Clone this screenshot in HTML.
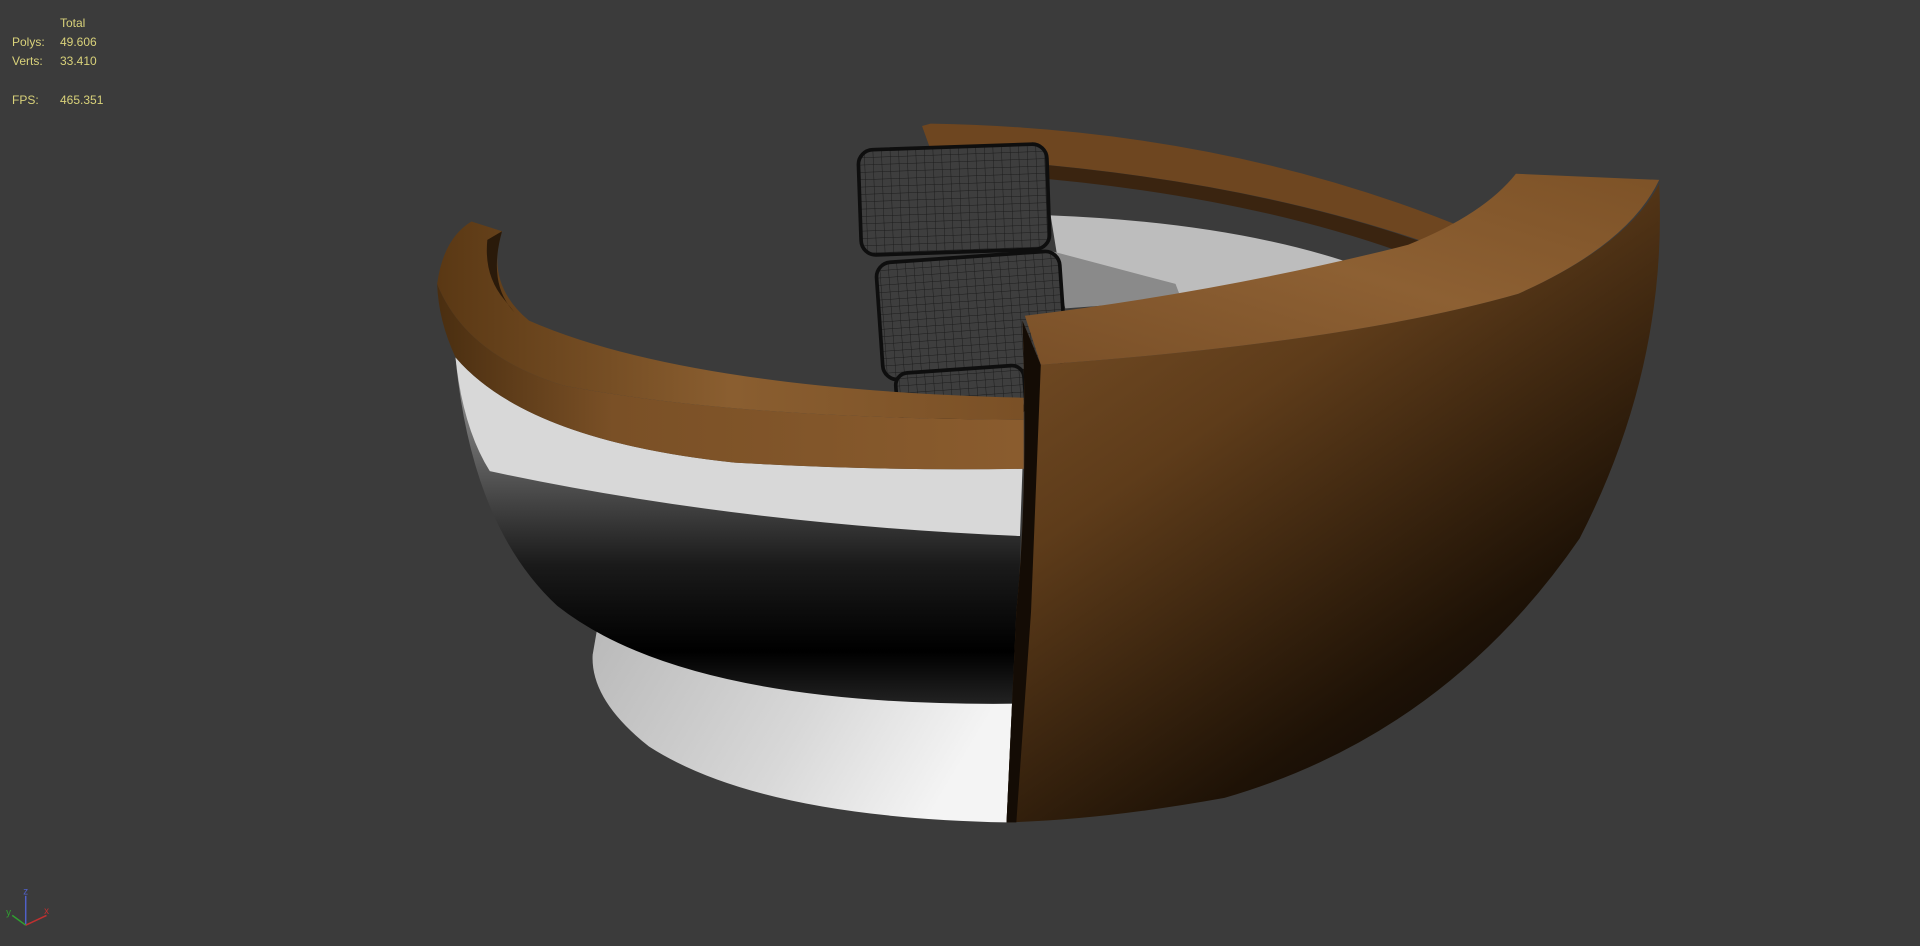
<!DOCTYPE html>
<html><head><style>
html,body{margin:0;padding:0;background:#3b3b3b;width:1920px;height:946px;overflow:hidden}
.t{position:absolute;font-family:"Liberation Sans",sans-serif;font-size:12px;color:#d9d27a;line-height:13px}
svg{position:absolute;left:0;top:0}
</style></head><body>
<svg width="1920" height="946" viewBox="0 0 1568 773" preserveAspectRatio="none">
<defs>
<linearGradient id="bowl" x1="0" y1="0" x2="0" y2="1">
<stop offset="0" stop-color="#9a9a9a"/><stop offset="0.25" stop-color="#6a6a6a"/><stop offset="0.6" stop-color="#1a1a1a"/><stop offset="0.85" stop-color="#000"/><stop offset="1" stop-color="#222"/></linearGradient>
<linearGradient id="base" x1="0" y1="0" x2="1" y2="0.3">
<stop offset="0" stop-color="#b8b8b8"/><stop offset="0.6" stop-color="#d8d8d8"/><stop offset="1" stop-color="#f4f4f4"/></linearGradient>
<linearGradient id="front" x1="0" y1="0" x2="0.7" y2="1">
<stop offset="0" stop-color="#7e542a"/><stop offset="0.4" stop-color="#5e3c1a"/><stop offset="0.8" stop-color="#1e1206"/><stop offset="1" stop-color="#0a0603"/></linearGradient>
<linearGradient id="top" x1="0" y1="1" x2="1" y2="0">
<stop offset="0" stop-color="#7a5028"/><stop offset="0.5" stop-color="#8d6033"/><stop offset="1" stop-color="#7d5227"/></linearGradient>
<linearGradient id="lface" x1="0" y1="0" x2="1" y2="0">
<stop offset="0" stop-color="#5a3814"/><stop offset="0.5" stop-color="#8a5e30"/><stop offset="1" stop-color="#7a5026"/></linearGradient>
<linearGradient id="lfront" x1="0" y1="0" x2="1" y2="0">
<stop offset="0" stop-color="#4a2e10"/><stop offset="0.3" stop-color="#7a5026"/><stop offset="1" stop-color="#8a5c2e"/></linearGradient>
<pattern id="grid" width="7" height="6" patternUnits="userSpaceOnUse">
<rect width="7" height="6" fill="#3e3e3e"/><path d="M0 0H7M0 0V6" stroke="#1c1c1c" stroke-width="0.8"/></pattern>
</defs>
<!-- base -->
<path d="M488 512 Q600 498 830 498 L822 672 Q620 668 530 610 Q482 572 484 535 Z" fill="url(#base)"/>
<!-- back ring -->
<path d="M753 103 L760 101 Q1000 105 1200 188 L1170 200 Q1000 140 762 128 Z" fill="#6e4620"/>
<path d="M760 128 Q1000 140 1168 200 L1150 208 Q990 150 765 140 Z" fill="#3a2410"/>
<!-- inner white -->
<path d="M858 176 Q1010 182 1112 218 Q1030 238 965 243 L870 250 Z" fill="#bdbdbd"/>
<path d="M858 205 L960 232 L965 245 L870 252 Z" fill="#8a8a8a"/>
<!-- chair -->
<g stroke="#0e0e0e" stroke-width="3">
<rect x="702" y="120" width="154" height="86" rx="12" fill="url(#grid)" transform="rotate(-2 780 160)"/>
<rect x="718" y="210" width="150" height="96" rx="12" fill="url(#grid)" transform="rotate(-4 790 255)"/>
<rect x="732" y="302" width="105" height="40" rx="10" fill="url(#grid)" transform="rotate(-4 780 320)"/>
</g>
<!-- bowl -->
<path d="M372 292 Q430 360 600 378 Q720 385 835 383 L830 575 Q560 578 455 495 Q385 430 372 292 Z" fill="url(#bowl)"/>
<path d="M372 292 Q430 360 600 378 Q720 385 835 383 L833 438 Q600 428 400 385 Q378 350 372 292 Z" fill="#d8d8d8"/>
<!-- left rim front -->
<path d="M357 232 Q380 290 460 315 Q600 342 836 343 L836 383 Q720 385 600 378 Q430 360 372 292 Q358 262 357 232 Z" fill="url(#lfront)"/>
<!-- left rim top -->
<path d="M385 181 L410 189 Q396 232 432 262 Q560 318 836 325 L836 343 Q600 342 460 315 Q380 290 357 232 Q362 195 385 181 Z" fill="url(#lface)"/>
<path d="M398 196 L410 189 Q398 232 420 255 L412 245 Q395 225 398 196 Z" fill="#2a1a0a"/>
<!-- right panel -->
<path d="M850 298 Q1100 280 1240 240 Q1330 200 1355 150 Q1362 300 1290 440 Q1180 600 1000 652 Q900 670 822 672 L830 500 Q840 400 835 262 Z" fill="url(#front)"/>
<path d="M835 262 L850 298 L842 500 L830 672 L822 672 L830 500 Q840 400 835 262 Z" fill="#140c05"/>
<path d="M837 258 Q1000 238 1150 200 Q1212 175 1238 142 L1355 147 Q1330 200 1240 240 Q1100 280 850 298 Z" fill="url(#top)"/>
<!-- axis -->
<g stroke-width="1.2" fill="none">
<path d="M21 756 V732" stroke="#5060c8"/>
<path d="M21 756 L38 748" stroke="#c03030"/>
<path d="M21 756 L10 748" stroke="#30a030"/>
</g>
<text x="19" y="731" font-size="8" fill="#5060c8" font-family="Liberation Sans">z</text>
<text x="5" y="748" font-size="8" fill="#30a030" font-family="Liberation Sans">y</text>
<text x="36" y="747" font-size="8" fill="#c03030" font-family="Liberation Sans">x</text>
</svg>
<div class="t" style="left:60px;top:17px">Total</div>
<div class="t" style="left:12px;top:36px">Polys:</div><div class="t" style="left:60px;top:36px">49.606</div>
<div class="t" style="left:12px;top:55px">Verts:</div><div class="t" style="left:60px;top:55px">33.410</div>
<div class="t" style="left:12px;top:94px">FPS:</div><div class="t" style="left:60px;top:94px">465.351</div>
</body></html>
